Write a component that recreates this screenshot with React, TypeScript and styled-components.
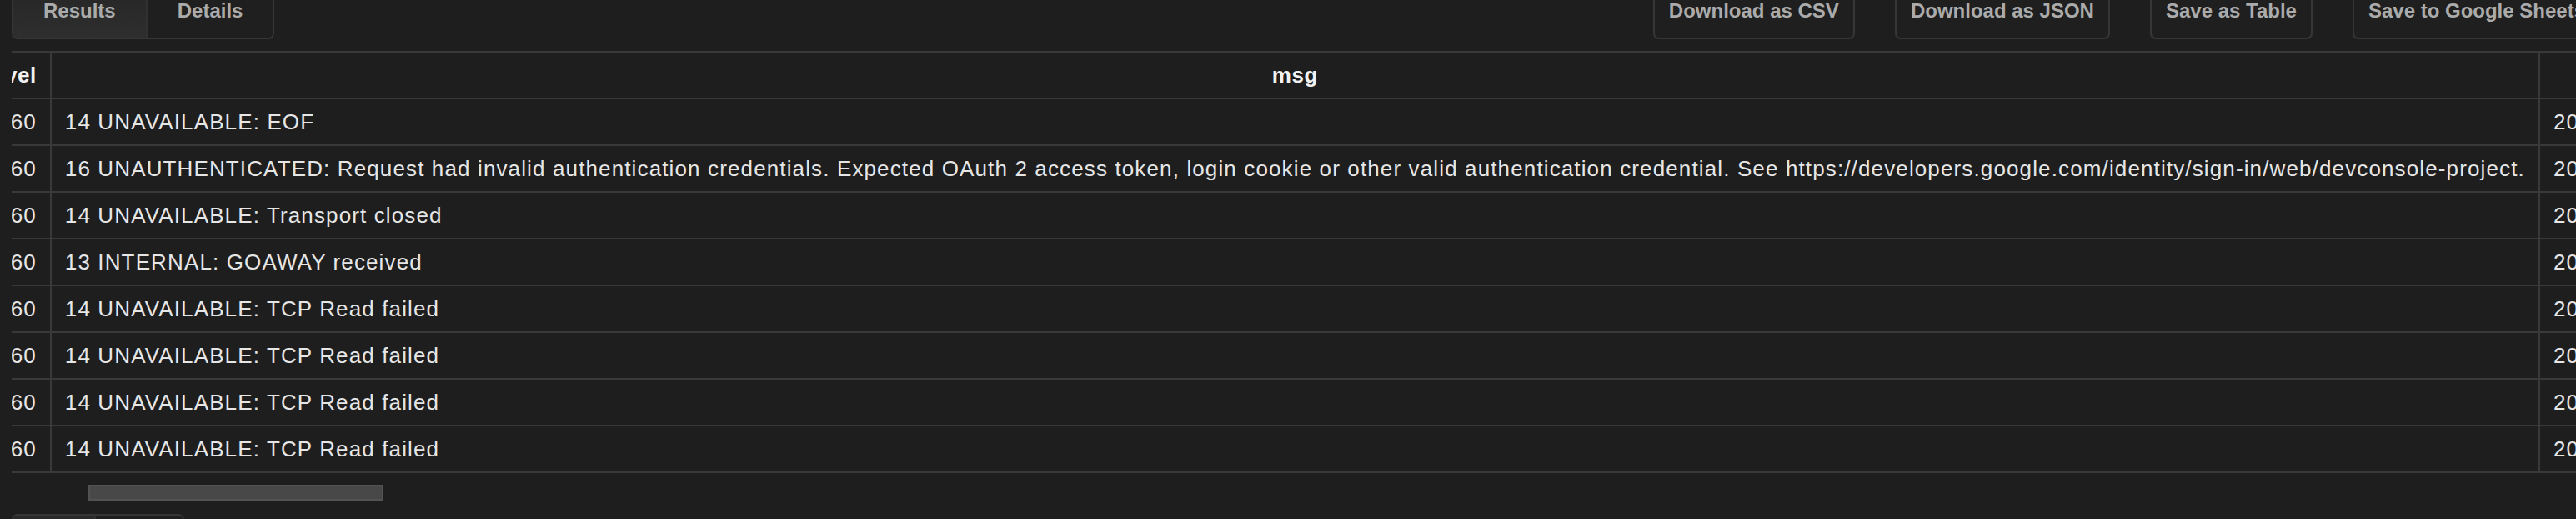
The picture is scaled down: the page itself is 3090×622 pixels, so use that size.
import styled, { createGlobalStyle } from "styled-components";

const GlobalStyle = createGlobalStyle`
  html, body {
    margin: 0;
    padding: 0;
    background: #1e1e1e;
    font-family: "Liberation Sans", Arial, sans-serif;
  }
`;

const rows = [
  { level: 60, msg: "14 UNAVAILABLE: EOF", time: "2023-11-08T14:02:11.482Z" },
  {
    level: 60,
    msg: "16 UNAUTHENTICATED: Request had invalid authentication credentials. Expected OAuth 2 access token, login cookie or other valid authentication credential. See https://developers.google.com/identity/sign-in/web/devconsole-project.",
    time: "2023-11-08T13:57:40.019Z",
  },
  { level: 60, msg: "14 UNAVAILABLE: Transport closed", time: "2023-11-08T13:41:05.773Z" },
  { level: 60, msg: "13 INTERNAL: GOAWAY received", time: "2023-11-08T13:12:58.306Z" },
  { level: 60, msg: "14 UNAVAILABLE: TCP Read failed", time: "2023-11-08T12:49:27.915Z" },
  { level: 60, msg: "14 UNAVAILABLE: TCP Read failed", time: "2023-11-08T12:31:03.640Z" },
  { level: 60, msg: "14 UNAVAILABLE: TCP Read failed", time: "2023-11-08T12:30:44.128Z" },
  { level: 60, msg: "14 UNAVAILABLE: TCP Read failed", time: "2023-11-08T12:30:21.557Z" },
];

const Page = styled.div`
  height: 622px;
  overflow: hidden;
  padding-left: 14px;
`;

const Toolbar = styled.div`
  display: flex;
  justify-content: space-between;
  align-items: stretch;
  width: 3106px;
  height: 63px;
  margin-top: -16px;
`;

const TabGroup = styled.div`
  display: flex;
  border: 2px solid #363636;
  border-top: none;
  border-radius: 0 0 7px 7px;
  overflow: hidden;
`;

const Tab = styled.button<{ $active?: boolean }>`
  font: bold 24px "Liberation Sans", Arial, sans-serif;
  color: #ababab;
  padding: 0 36px 4px;
  border: none;
  border-left: ${(p) => (p.$active ? "none" : "2px solid #303030")};
  background: ${(p) =>
    p.$active ? "linear-gradient(#262626, #2e2e2e)" : "#1f1f1f"};
  cursor: pointer;
`;

const Actions = styled.div`
  display: flex;
  gap: 48px;
`;

const ActionButton = styled.button`
  font: bold 24px "Liberation Sans", Arial, sans-serif;
  color: #ababab;
  padding: 0 17px 4px;
  background: #1f1f1f;
  border: 2px solid #363636;
  border-top: none;
  border-radius: 0 0 7px 7px;
  white-space: nowrap;
  cursor: pointer;
`;

const Viewport = styled.div`
  margin-top: 14px;
  overflow: hidden;
`;

/* the grid is scrolled sideways a little, so the level column is clipped */
const Grid = styled.table`
  border-collapse: collapse;
  margin-left: -49px;
  white-space: nowrap;
  font-size: 26px;
  letter-spacing: 1.13px;
  color: #e6e6e6;
`;

const HeadCell = styled.th`
  height: 56px;
  box-sizing: border-box;
  padding: 0 16px;
  border: 2px solid #393939;
  font-weight: bold;
  letter-spacing: 0.6px;
  color: #f2f2f2;
  text-align: center;
`;

const Cell = styled.td<{ $align?: "left" | "right" }>`
  height: 56px;
  box-sizing: border-box;
  padding: 0 16px;
  border: 2px solid #393939;
  text-align: ${(p) => p.$align ?? "left"};
`;

const ScrollTrack = styled.div`
  margin-top: 14px;
  height: 19px;
`;

const ScrollThumb = styled.div`
  margin-left: 92px;
  width: 354px;
  height: 100%;
  box-sizing: border-box;
  background: #484848;
  border: 2px solid #525252;
`;

const BottomTabs = styled.div`
  display: flex;
  width: fit-content;
  margin-top: 16px;
  border: 2px solid #363636;
  border-bottom: none;
  border-radius: 7px 7px 0 0;
  overflow: hidden;
`;

const BottomTab = styled.div<{ $active?: boolean; $w: number }>`
  width: ${(p) => p.$w}px;
  height: 30px;
  background: ${(p) => (p.$active ? "#2a2a2a" : "#1f1f1f")};
  border-left: ${(p) => (p.$active ? "none" : "2px solid #303030")};
`;

export default function App() {
  return (
    <>
      <GlobalStyle />
      <Page>
        <Toolbar>
          <TabGroup>
            <Tab $active>Results</Tab>
            <Tab>Details</Tab>
          </TabGroup>
          <Actions>
            <ActionButton>Download as CSV</ActionButton>
            <ActionButton>Download as JSON</ActionButton>
            <ActionButton>Save as Table</ActionButton>
            <ActionButton>Save to Google Sheets</ActionButton>
          </Actions>
        </Toolbar>
        <Viewport>
          <Grid>
            <thead>
              <tr>
                <HeadCell>level</HeadCell>
                <HeadCell>msg</HeadCell>
                <HeadCell>time</HeadCell>
              </tr>
            </thead>
            <tbody>
              {rows.map((r, i) => (
                <tr key={i}>
                  <Cell $align="right">{r.level}</Cell>
                  <Cell>{r.msg}</Cell>
                  <Cell>{r.time}</Cell>
                </tr>
              ))}
            </tbody>
          </Grid>
        </Viewport>
        <ScrollTrack>
          <ScrollThumb />
        </ScrollTrack>
        <BottomTabs>
          <BottomTab $active $w={97} />
          <BottomTab $w={104} />
        </BottomTabs>
      </Page>
    </>
  );
}
